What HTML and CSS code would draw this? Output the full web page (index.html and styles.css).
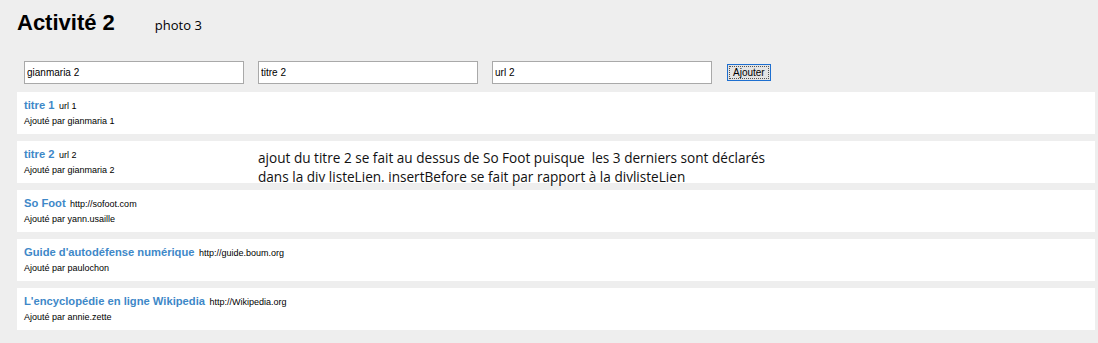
FILE: index.html
```html
<!DOCTYPE html>
<html lang="fr">
<head>
    <meta charset="UTF-8">
    <title>Activité 2</title>
    <link rel="stylesheet" href="styles.css">
</head>
<body>

    <div class="header">
        <h1>Activité 2</h1>
        <span class="note-photo">photo 3</span>
    </div>

    <!-- Formulaire d'ajout -->
    <form class="add-form">
        <input type="text" value="gianmaria 2">
        <input type="text" value="titre 2">
        <input type="text" value="url 2">
        <button type="button">Ajouter</button>
    </form>

    <div class="liste" id="listeLien">
        <div class="lien">
            <div class="lien-ligne"><a class="lien-titre" href="#">titre 1</a> <span class="lien-url">url 1</span></div>
            <div class="lien-auteur">Ajouté par gianmaria 1</div>
        </div>
        <div class="lien">
            <div class="lien-ligne"><a class="lien-titre" href="#">titre 2</a> <span class="lien-url">url 2</span></div>
            <div class="lien-auteur">Ajouté par gianmaria 2</div>
        </div>
        <div class="lien">
            <div class="lien-ligne"><a class="lien-titre" href="#">So Foot</a> <span class="lien-url">http://sofoot.com</span></div>
            <div class="lien-auteur">Ajouté par yann.usaille</div>
        </div>
        <div class="lien">
            <div class="lien-ligne"><a class="lien-titre" href="#">Guide d'autodéfense numérique</a> <span class="lien-url">http://guide.boum.org</span></div>
            <div class="lien-auteur">Ajouté par paulochon</div>
        </div>
        <div class="lien">
            <div class="lien-ligne"><a class="lien-titre" href="#">L'encyclopédie en ligne Wikipedia</a> <span class="lien-url">http://Wikipedia.org</span></div>
            <div class="lien-auteur">Ajouté par annie.zette</div>
        </div>

        <!-- annotation -->
        <p class="annotation">ajout du titre 2 se fait au dessus de So Foot puisque&nbsp; les 3 derniers sont déclarés<br>dans la div listeLien. insertBefore se fait par rapport à la divlisteLien</p>
    </div>

</body>
</html>
```

FILE: styles.css
```css
body {
    margin: 0;
    padding: 0 3px 0 17px;
    background-color: #eeeeee;
    font-family: "Liberation Sans", Arial, sans-serif;
    color: #000;
}
.header {
    display: flex;
    align-items: baseline;
    padding-top: 10px;
    height: 30px;
}
.header h1 {
    margin: 0;
    font-size: 22px;
    font-weight: bold;
    line-height: 26px;
}
.note-photo {
    margin-left: 40px;
    font-family: "Open Sans", sans-serif;
    font-size: 13px;
}

/* Formulaire */
.add-form {
    display: flex;
    align-items: center;
    margin: 19px 0 7px 7px;
    height: 26px;
}
.add-form input {
    width: 214px;
    height: 19px;
    margin: 0 14px 0 0;
    padding: 1px 2px;
    border: 1px solid #a9a9a9;
    font-family: "Liberation Sans", Arial, sans-serif;
    font-size: 10px;
    background: #fff;
}
.add-form button {
    margin-left: 1px;
    height: 17px;
    padding: 0 5px;
    border: 1px solid #1e6fd0;
    outline: 1px dotted #555;
    outline-offset: -3px;
    background: #e4e4e4;
    font-family: "Liberation Sans", Arial, sans-serif;
    font-size: 10px;
    line-height: 13px;
}

/* Liste des liens */
.liste {
    position: relative;
    display: flex;
    flex-direction: column;
    gap: 7px;
}
.lien {
    background-color: #fff;
    padding: 5px 7px 8px;
    height: 29px;
}
.lien-ligne {
    line-height: 14px;
}
.lien-titre {
    color: #3e88c8;
    font-weight: bold;
    font-size: 11.2px;
    text-decoration: none;
}
.lien-url {
    font-size: 9px;
}
.lien-auteur {
    padding-top: 2px;
    font-size: 9px;
    line-height: 13px;
}
.annotation {
    position: absolute;
    left: 241px;
    top: 56px;
    margin: 0;
    font-family: "Open Sans", sans-serif;
    font-size: 13.6px;
    line-height: 19px;
    color: #111;
}
```
